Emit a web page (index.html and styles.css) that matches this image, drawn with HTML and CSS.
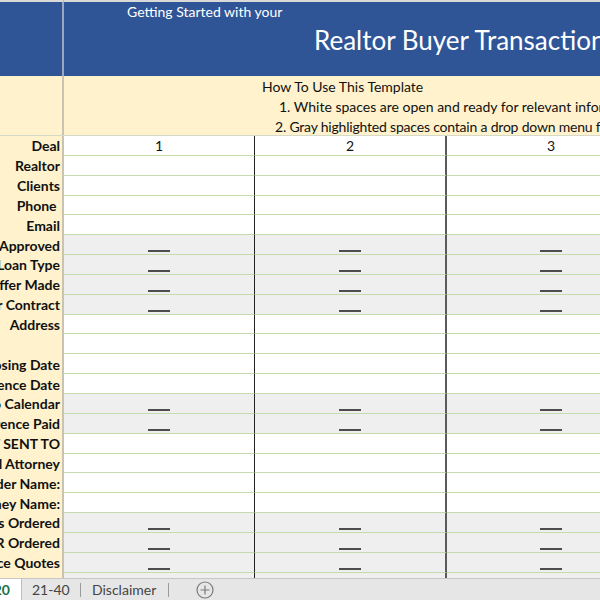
FILE: index.html
```html
<!DOCTYPE html>
<html>
<head>
<meta charset="utf-8">
<link rel="stylesheet" href="styles.css">
</head>
<body>
<div class="sheet">
  <div class="topstrip"><div class="ts-left"></div><div class="ts-rest"></div></div>
  <header class="banner">
    <div class="b-left"></div>
    <div class="b-main">
      <div class="b-sub">Getting Started with your</div>
      <div class="b-title">Realtor Buyer Transaction Tracker</div>
    </div>
  </header>
  <section class="howto">
    <div class="h-left"></div>
    <div class="h-main">
      <div class="h-line h1">How To Use This Template</div>
      <div class="h-line h2">1. White spaces are open and ready for relevant information</div>
      <div class="h-line h3">2. Gray highlighted spaces contain a drop down menu for selection</div>
    </div>
  </section>
  <div class="grid">
    <div class="row"><div class="lab"><span>Deal</span></div><div class="c c1">1</div><div class="c c2">2</div><div class="c c3">3</div></div>
    <div class="row"><div class="lab"><span>Realtor</span></div><div class="c c1"></div><div class="c c2"></div><div class="c c3"></div></div>
    <div class="row"><div class="lab"><span>Clients</span></div><div class="c c1"></div><div class="c c2"></div><div class="c c3"></div></div>
    <div class="row"><div class="lab"><span>Phone&nbsp;</span></div><div class="c c1"></div><div class="c c2"></div><div class="c c3"></div></div>
    <div class="row"><div class="lab"><span>Email</span></div><div class="c c1"></div><div class="c c2"></div><div class="c c3"></div></div>
    <div class="row gray"><div class="lab"><span>Pre-Approved</span></div><div class="c c1"><i class="dash"></i></div><div class="c c2"><i class="dash"></i></div><div class="c c3"><i class="dash"></i></div></div>
    <div class="row gray"><div class="lab"><span>Loan Type</span></div><div class="c c1"><i class="dash"></i></div><div class="c c2"><i class="dash"></i></div><div class="c c3"><i class="dash"></i></div></div>
    <div class="row gray"><div class="lab"><span>Offer Made</span></div><div class="c c1"><i class="dash"></i></div><div class="c c2"><i class="dash"></i></div><div class="c c3"><i class="dash"></i></div></div>
    <div class="row gray"><div class="lab"><span>Under Contract</span></div><div class="c c1"><i class="dash"></i></div><div class="c c2"><i class="dash"></i></div><div class="c c3"><i class="dash"></i></div></div>
    <div class="row"><div class="lab"><span>Address</span></div><div class="c c1"></div><div class="c c2"></div><div class="c c3"></div></div>
    <div class="row"><div class="lab"><span></span></div><div class="c c1"></div><div class="c c2"></div><div class="c c3"></div></div>
    <div class="row"><div class="lab"><span>Closing Date</span></div><div class="c c1"></div><div class="c c2"></div><div class="c c3"></div></div>
    <div class="row"><div class="lab"><span>Occurrence Date</span></div><div class="c c1"></div><div class="c c2"></div><div class="c c3"></div></div>
    <div class="row gray"><div class="lab"><span>Added to Calendar</span></div><div class="c c1"><i class="dash"></i></div><div class="c c2"><i class="dash"></i></div><div class="c c3"><i class="dash"></i></div></div>
    <div class="row gray"><div class="lab"><span>Occurrence Paid</span></div><div class="c c1"><i class="dash"></i></div><div class="c c2"><i class="dash"></i></div><div class="c c3"><i class="dash"></i></div></div>
    <div class="row"><div class="lab"><span>CONTRACT SENT TO</span></div><div class="c c1"></div><div class="c c2"></div><div class="c c3"></div></div>
    <div class="row"><div class="lab"><span>Legal Attorney</span></div><div class="c c1"></div><div class="c c2"></div><div class="c c3"></div></div>
    <div class="row"><div class="lab"><span>Lender Name:</span></div><div class="c c1"></div><div class="c c2"></div><div class="c c3"></div></div>
    <div class="row"><div class="lab"><span>Attorney Name:</span></div><div class="c c1"></div><div class="c c2"></div><div class="c c3"></div></div>
    <div class="row gray"><div class="lab"><span>Inspections Ordered</span></div><div class="c c1"><i class="dash"></i></div><div class="c c2"><i class="dash"></i></div><div class="c c3"><i class="dash"></i></div></div>
    <div class="row gray"><div class="lab"><span>HOR Ordered</span></div><div class="c c1"><i class="dash"></i></div><div class="c c2"><i class="dash"></i></div><div class="c c3"><i class="dash"></i></div></div>
    <div class="row gray"><div class="lab"><span>Insurance Quotes</span></div><div class="c c1"><i class="dash"></i></div><div class="c c2"><i class="dash"></i></div><div class="c c3"><i class="dash"></i></div></div>
    <div class="row gray"><div class="lab"><span>Title Search</span></div><div class="c c1"></div><div class="c c2"></div><div class="c c3"></div></div>
  </div>
  <nav class="tabs">
    <div class="tab active"><span>1-20</span></div>
    <div class="tab t2">21-40</div>
    <div class="sep"></div>
    <div class="tab t3">Disclaimer</div>
    <div class="sep"></div>
    <div class="add"><svg width="18" height="18" viewBox="0 0 18 18"><circle cx="9" cy="9" r="8" fill="none" stroke="#7a7a7a" stroke-width="1.2"/><path d="M9 4.5v9M4.5 9h9" stroke="#7a7a7a" stroke-width="1.2"/></svg></div>
  </nav>
</div>
</body>
</html>
```

FILE: styles.css
```css
* { box-sizing: border-box; margin: 0; padding: 0; }
html, body { width: 600px; height: 600px; overflow: hidden; background: #fff; }
body { font-family: Lato, "Open Sans", sans-serif; color: #111; }
.sheet { display: flex; flex-direction: column; width: 600px; height: 600px; overflow: hidden; }

.topstrip { display: flex; height: 2px; background: #d9d9d9; }
.ts-left { width: 64px; border-right: 1px solid #b8b8b8; }

.banner { display: flex; height: 74px; background: #2f5597; }
.b-left { width: 64px; flex: none; border-right: 2px solid #9aa7bf; }
.b-main { flex: 1; min-width: 0; overflow: hidden; white-space: nowrap; color: #fff; }
.b-sub { font-size: 14px; line-height: 20px; padding-left: 63px; }
.b-title { font-size: 26px; line-height: 36px; padding-left: 250px; }

.howto { display: flex; height: 60px; background: #fff2cc; border-bottom: 1px solid #d5d9c8; }
.h-left { width: 64px; flex: none; border-right: 2px solid #c9c4b2; }
.h-main { flex: 1; min-width: 0; overflow: hidden; white-space: nowrap; padding-top: 1px; font-size: 14px; }
.h-line { line-height: 20px; }
.h1 { padding-left: 198px; }
.h2 { padding-left: 215px; }
.h3 { padding-left: 211px; letter-spacing: -0.2px; }

.grid { flex: 1; min-height: 0; overflow: hidden; }
.row { display: grid; grid-template-columns: 64px 191px 192px 208px; height: 19.85px; overflow: hidden; }
.lab { display: flex; justify-content: flex-end; align-items: center; overflow: hidden; white-space: nowrap; background: #fff2cc; border-right: 2px solid #c9c4b2; padding-right: 2px; font-weight: 700; font-size: 14px; }
.c { position: relative; display: flex; justify-content: center; align-items: center; border-bottom: 1px solid #c4dbae; font-size: 14px; }
.c1 { border-right: 1px solid #222; }
.c2 { border-right: 2px solid #5a5a5a; }
.row.gray .c { background: #efefef; }
.dash { position: absolute; left: 50%; bottom: 2px; width: 22px; margin-left: -11px; height: 2px; background: #4d4d4d; }

.tabs { flex: none; height: 22px; display: flex; align-items: center; background: #e6e6e6; border-top: 1px solid #c6c6c6; font-size: 14px; color: #444; }
.tab { line-height: 21px; white-space: nowrap; }
.tab.active { display: flex; justify-content: flex-end; width: 22px; height: 21px; padding-right: 11px; overflow: hidden; background: #fff; color: #1e7145; font-weight: 700; border-right: 1px solid #bdbdbd; }
.t2 { width: 58px; padding-left: 10px; }
.t3 { width: 87px; padding-left: 11px; }
.sep { width: 1px; height: 14px; background: #9a9a9a; }
.add { margin-left: 27px; display: flex; }
```
